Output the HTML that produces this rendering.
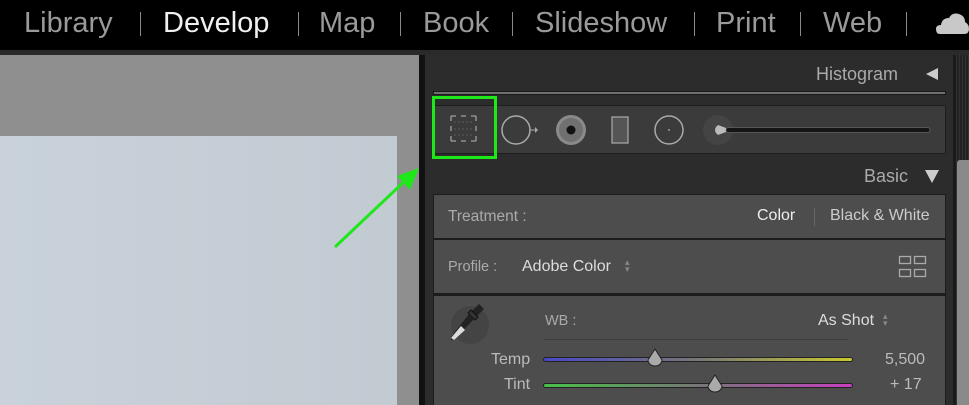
<!DOCTYPE html>
<html><head><meta charset="utf-8"><style>
*{margin:0;padding:0;box-sizing:border-box}
body{width:969px;height:405px;overflow:hidden;background:#000;font-family:"Liberation Sans",sans-serif;position:relative}
.a{position:absolute}
.nav{top:7px;font-size:29px;color:#9a9a9a;white-space:nowrap}
.sep{top:12px;width:1px;height:24px;background:#8a8a8a}
.lbl{color:#b8b8b8;font-size:15px}
</style></head><body>
<div class="a nav" style="left:24px">Library</div>
<div class="a nav" style="left:163px;color:#f0f0f0">Develop</div>
<div class="a nav" style="left:319px">Map</div>
<div class="a nav" style="left:423px">Book</div>
<div class="a nav" style="left:535px">Slideshow</div>
<div class="a nav" style="left:716px">Print</div>
<div class="a nav" style="left:823px">Web</div>
<div class="a sep" style="left:140px"></div><div class="a sep" style="left:298px"></div><div class="a sep" style="left:400px"></div><div class="a sep" style="left:512px"></div><div class="a sep" style="left:694px"></div><div class="a sep" style="left:800px"></div><div class="a sep" style="left:906px"></div>
<svg class="a" style="left:936px;top:12px" width="33" height="24"><path d="M4 22 Q0 22 0 17 Q0 13 5 13 Q6 6 13 6 Q16 0 23 2 Q29 4 29 10 Q33 12 33 17 Q33 22 28 22Z" fill="#c8c8c8"/></svg>
<div class="a" style="left:0;top:50px;width:969px;height:5px;background:#2a2a2a"></div>
<div class="a" style="left:0;top:55px;width:419px;height:350px;background:#8f8f8f"></div>
<div class="a" style="left:0;top:136px;width:397px;height:269px;background:linear-gradient(90deg,#c9d2da,#c2cad2)"></div>
<div class="a" style="left:419px;top:55px;width:6px;height:350px;background:#111"></div>
<div class="a" style="left:425px;top:55px;width:530px;height:350px;background:#2c2c2c"></div>
<div class="a" style="left:953px;top:55px;width:3px;height:350px;background:#1a1a1a"></div>
<div class="a" style="left:956px;top:55px;width:13px;height:350px;background:repeating-linear-gradient(90deg,#333 0 1px,#222 1px 3px)"></div>
<div class="a" style="left:957px;top:160px;width:12px;height:245px;background:#8a8a8a;border-radius:3px 0 0 0"></div>
<div class="a lbl" style="left:816px;top:64px;font-size:18px;color:#aaa">Histogram</div>
<svg class="a" style="left:925px;top:67px" width="14" height="14"><path d="M13 1 L1 7 L13 13Z" fill="#ccc"/></svg>
<div class="a" style="left:433px;top:91px;width:513px;height:4px;background:#707070;border:1px solid #1a1a1a"></div>
<div class="a" style="left:433px;top:105px;width:513px;height:49px;background:#3b3b3b;border:1px solid #1d1d1d"></div>
<svg class="a" style="left:440px;top:110px" width="500" height="40">
<g stroke="#a0a0a0" stroke-width="1.3" fill="none">
<path d="M11 6h5M21 6h5M31 6h5M11 6v5M11 16v5M11 26v5M36 6v5M36 16v5M36 26v5M11 31h5M21 31h5M31 31h5"/>
<path d="M14 12h19M14 19h19M14 25h19" stroke="#555" stroke-dasharray="2 2"/>
</g>
<circle cx="76" cy="20" r="14" stroke="#aaa" stroke-width="1.5" fill="none"/><path d="M90 20h5" stroke="#aaa"/><path d="M95 17l3 3-3 3z" fill="#aaa"/>
<circle cx="131" cy="20" r="15" fill="#8a8a8a"/><circle cx="131" cy="20" r="12" fill="#707070"/><circle cx="131" cy="20" r="4.5" fill="#111"/>
<rect x="172" y="7" width="16" height="26" fill="#555" stroke="#aaa" stroke-width="1.2"/>
<circle cx="229" cy="20" r="14" stroke="#aaa" stroke-width="1.5" fill="none"/><circle cx="229" cy="20" r="1" fill="#999"/>
<circle cx="278" cy="20" r="15" fill="#444"/><path d="M278 15 Q272 20 278 25 L286 22 L286 18Z" fill="#bbb"/>
<rect x="286" y="17.5" width="204" height="5" rx="2.5" fill="#151515" stroke="#666" stroke-width="0.7"/>
</svg>
<div class="a" style="left:432px;top:96px;width:65px;height:63px;border:3px solid #1ee81a"></div>
<div class="a lbl" style="left:864px;top:166px;font-size:18px;color:#aaa">Basic</div>
<svg class="a" style="left:924px;top:169px" width="16" height="15"><path d="M1 1H15L8 14Z" fill="#ccc"/></svg>
<div class="a" style="left:433px;top:194px;width:513px;height:211px;background:#1c1c1c"></div>
<div class="a" style="left:434px;top:195px;width:511px;height:43px;background:#4d4d4d"></div>
<div class="a" style="left:434px;top:240px;width:511px;height:53px;background:#4d4d4d"></div>
<div class="a" style="left:434px;top:296px;width:511px;height:109px;background:#4d4d4d"></div>
<div class="a lbl" style="left:448px;top:208px;color:#aaa;font-size:15.5px">Treatment :</div>
<div class="a lbl" style="left:757px;top:207px;color:#eee;font-size:16px">Color</div>
<div class="a" style="left:814px;top:208px;width:1px;height:18px;background:#666"></div>
<div class="a lbl" style="left:830px;top:207px;color:#ccc;font-size:16px">Black &amp; White</div>
<div class="a lbl" style="left:448px;top:259px;font-size:14.5px;color:#aaa">Profile :</div>
<div class="a lbl" style="left:522px;top:258px;color:#ddd;font-size:16px">Adobe Color</div>
<div class="a" style="left:625px;top:259px;font-size:9px;line-height:7px;color:#888">▴<br>▾</div>
<svg class="a" style="left:898px;top:254px" width="30" height="26" fill="none" stroke="#aaa" stroke-width="1.3"><rect x="1.5" y="2.5" width="11" height="7"/><rect x="16.5" y="2.5" width="11" height="7"/><rect x="1.5" y="15.5" width="11" height="7"/><rect x="16.5" y="15.5" width="11" height="7"/></svg>
<svg class="a" style="left:446px;top:300px" width="50" height="50"><circle cx="24" cy="25" r="19" fill="#444"/><path d="M33 4 L38 9 L31 16 L26 11Z" fill="#222"/><path d="M25 10 L32 17 L29 20 L22 13Z" fill="#333" stroke="#111"/><path d="M23 14 L28 19 L8 40 L5 40 L5 37Z" fill="#222"/><path d="M15 26 L19 30 L8 40 L5 38Z" fill="#ddd"/></svg>
<div class="a lbl" style="left:545px;top:313px;font-size:14.5px;color:#aaa">WB :</div>
<div class="a lbl" style="left:818px;top:312px;color:#ddd;font-size:16px">As Shot</div>
<div class="a" style="left:883px;top:313px;font-size:9px;line-height:7px;color:#888">▴<br>▾</div>
<div class="a" style="left:543px;top:339px;width:305px;height:1px;background:#3e3e3e"></div>
<div class="a lbl" style="left:491px;top:351px;color:#bbb;font-size:16px">Temp</div>
<div class="a lbl" style="left:504px;top:376px;color:#bbb;font-size:16px">Tint</div>
<div class="a lbl" style="left:885px;top:351px;color:#bbb;font-size:16px">5,500</div>
<div class="a lbl" style="left:890px;top:376px;color:#bbb;font-size:16px">+ 17</div>
<div class="a" style="left:543px;top:357px;width:310px;height:5px;border-radius:3px;background:linear-gradient(90deg,#4848c8,#777 50%,#c8c830);border:1px solid #222"></div>
<div class="a" style="left:543px;top:383px;width:310px;height:5px;border-radius:3px;background:linear-gradient(90deg,#48c048,#777 50%,#c840c0);border:1px solid #222"></div>
<svg class="a" style="left:646px;top:348px" width="18" height="20"><path d="M9 1 L16 12 A7 6 0 0 1 2 12Z" fill="#aaa" stroke="#222"/></svg>
<svg class="a" style="left:706px;top:374px" width="18" height="20"><path d="M9 1 L16 12 A7 6 0 0 1 2 12Z" fill="#aaa" stroke="#222"/></svg>
<svg class="a" style="left:320px;top:160px" width="110" height="100"><path d="M15 87 L88 18" stroke="#1ee81a" stroke-width="3"/><path d="M99 8 L77 16 L90 30Z" fill="#1ee81a"/></svg>
</body></html>
